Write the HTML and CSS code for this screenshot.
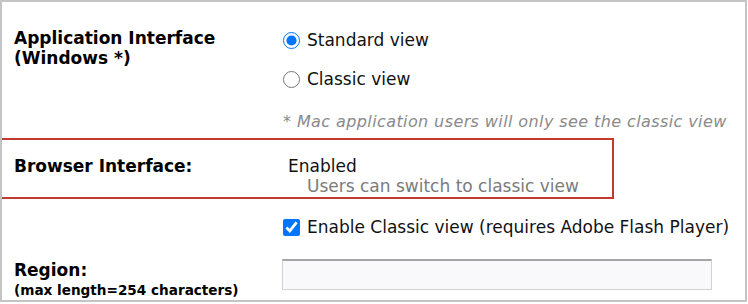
FILE: index.html
```html
<!DOCTYPE html>
<html lang="en">
<head>
  <meta charset="UTF-8" />
  <title>Interface Settings</title>
  <link rel="stylesheet" href="styles.css">
</head>
<body>
  <div class="frame">
    <div class="row app-row">
      <div class="label">Application Interface<br>(Windows *)</div>
      <div class="value">
        <label class="option"><input type="radio" name="view" checked> Standard view</label>
        <label class="option classic"><input type="radio" name="view"> Classic view</label>
        <div class="note">* Mac application users will only see the classic view</div>
      </div>
    </div>

    <div class="row browser-row">
      <div class="label">Browser Interface:</div>
      <div class="value">
        <div class="enabled">Enabled</div>
        <div class="hint">Users can switch to classic view</div>
      </div>
    </div>

    <div class="row check-row">
      <div class="label"></div>
      <div class="value">
        <label class="option"><input type="checkbox" checked> Enable Classic view (requires Adobe Flash Player)</label>
      </div>
    </div>

    <div class="row region-row">
      <div class="label">
        Region:
        <div class="small">(max length=254 characters)</div>
      </div>
      <div class="value">
        <input type="text" class="text-input" />
      </div>
    </div>
  </div>
</body>
</html>
```

FILE: styles.css
```css
body {
  margin: 0;
  background-color: #fff;
  font-family: "DejaVu Sans", Verdana, sans-serif;
  font-size: 17px;
  line-height: 20px;
  color: #111;
}

.frame {
  box-sizing: border-box;
  width: 747px;
  height: 302px;
  border: 2px solid #c4c4c4;
  padding: 28px 0 0 12px;
  overflow: hidden;
}

.row {
  display: flex;
}

.label {
  width: 269px;
  flex-shrink: 0;
  font-weight: bold;
  color: #000;
}

.value {
  flex: 1;
}

.app-row .label {
  margin-top: -2px;
}

.option {
  display: flex;
  align-items: center;
  gap: 7px;
  white-space: nowrap;
}

.option input {
  width: 17px;
  height: 17px;
  margin: 0;
}

.option.classic {
  margin-top: 19px;
}

.note {
  margin-top: 23px;
  font-size: 16px;
  letter-spacing: 0.4px;
  font-style: italic;
  color: #8a8a8a;
  white-space: nowrap;
}

.browser-row {
  width: 598px;
  margin: 6px 0 0 -14px;
  padding: 16px 0 1px 12px;
  border: 2px solid #c63a2c;
}

.enabled {
  padding-left: 5px;
}

.hint {
  padding-left: 24px;
  color: #7b7b7b;
}

.check-row {
  margin-top: 18px;
}

.region-row {
  margin-top: 22px;
}

.region-row .label {
  padding-top: 1px;
}

.small {
  margin-top: 2px;
  font-size: 13.6px;
  line-height: 16px;
}

.text-input {
  box-sizing: border-box;
  width: 430px;
  height: 31px;
  margin: 0 0 0 -1px;
  border: 1px solid #d2d2d2;
  border-top: 2px solid #a5a5a5;
  background-color: #f9f8fb;
}
```
